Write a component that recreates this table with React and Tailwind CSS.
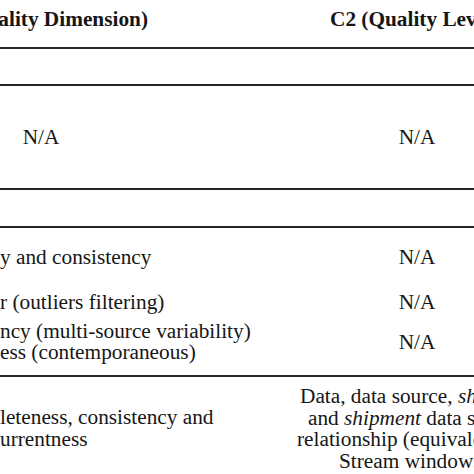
const serif = { fontFamily: '"Liberation Serif", "Times New Roman", serif' };

const Cell = ({ left, right, className = "" }) => (
  <div className={`flex ${className}`}>
    <div className="w-[310px] shrink-0 whitespace-nowrap">{left}</div>
    <div className="w-[214px] shrink-0 text-center whitespace-nowrap">{right}</div>
  </div>
);

export default function App() {
  return (
    <div
      className="w-[474px] h-[474px] overflow-hidden bg-white text-[#161616] text-[21.3px] leading-[22px]"
      style={serif}
    >
      {/* header */}
      <div className="h-[49px] pt-[8px] border-b-2 border-[#262626] flex font-bold">
        <div className="w-[148px] shrink-0 flex justify-end whitespace-nowrap">
          <span>C1 (Quality Dimension)</span>
        </div>
        <div className="ml-[182px] whitespace-nowrap">C2 (Quality Level)</div>
      </div>

      <div className="h-[37px] border-b-2 border-[#262626]" />

      <div className="h-[104px] pt-[40px] border-b-2 border-[#262626] flex">
        <div className="w-[82px] shrink-0 text-center">N/A</div>
        <div className="ml-[228px] w-[214px] shrink-0 text-center">N/A</div>
      </div>

      <div className="h-[38px] border-b-2 border-[#262626]" />

      <div className="h-[149px] pt-[18px] border-b-2 border-[#262626] flex flex-col">
        <Cell className="h-[22px]" left="y and consistency" right="N/A" />
        <Cell className="h-[22px] mt-[23px]" left="r (outliers filtering)" right="N/A" />
        <div className="flex mt-[8px] h-[42px] items-center leading-[21px]">
          <div className="w-[310px] shrink-0 whitespace-nowrap">
            <div>ncy (multi-source variability)</div>
            <div>ess (contemporaneous)</div>
          </div>
          <div className="w-[214px] shrink-0 text-center">N/A</div>
        </div>
      </div>

      <div className="flex">
        <div className="w-[295px] shrink-0 pt-[29px] whitespace-nowrap">
          <div>leteness, consistency and</div>
          <div>urrentness</div>
        </div>
        <div className="pt-[9px] leading-[21.5px] whitespace-nowrap">
          <div className="ml-[5px]">
            Data, data source, <i>shipment</i>
          </div>
          <div className="ml-[13px]">
            and <i>shipment</i> data stream
          </div>
          <div className="ml-[2px]">relationship (equivalence)</div>
          <div className="ml-[44px]">Stream windows</div>
        </div>
      </div>
    </div>
  );
}
